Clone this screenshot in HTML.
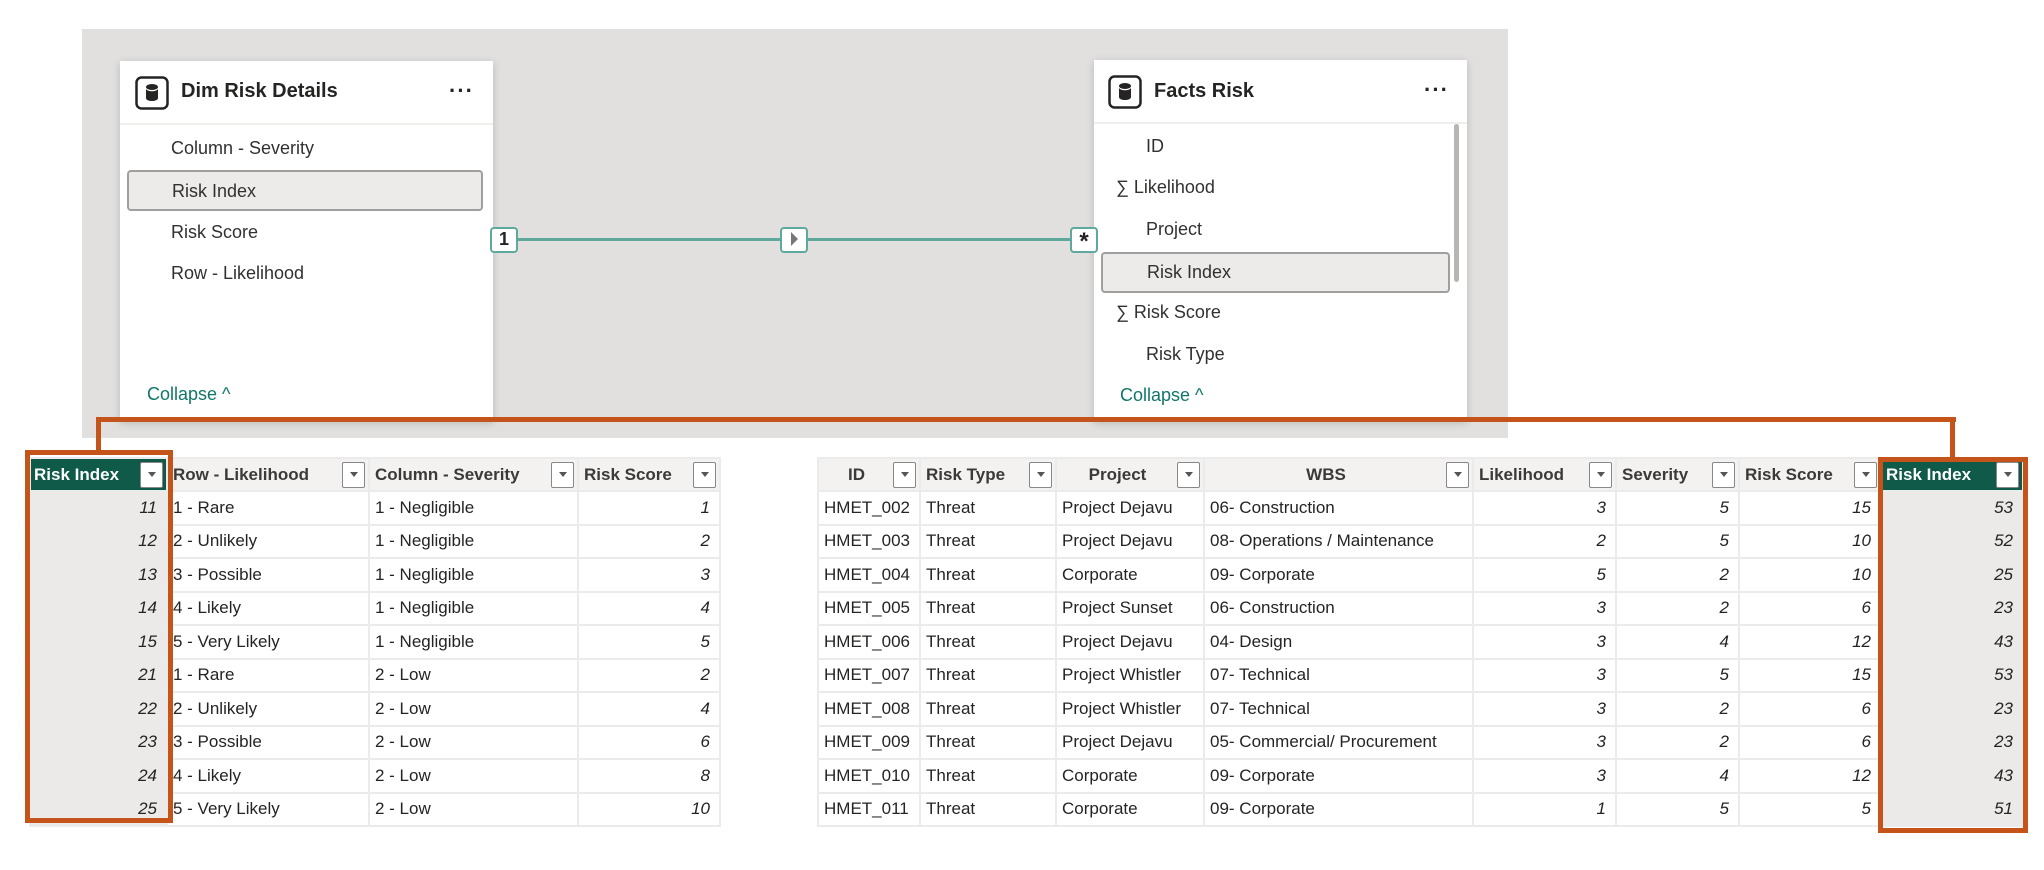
<!DOCTYPE html>
<html><head><meta charset="utf-8"><style>
*{box-sizing:border-box;margin:0;padding:0}
body{width:2044px;height:870px;background:#fff;position:relative;overflow:hidden;font-family:"Liberation Sans",sans-serif;color:#252423}
.abs{position:absolute}
.gray{left:82px;top:29px;width:1426px;height:409px;background:#e1e0df}
.card{background:#fff;box-shadow:0 2px 8px rgba(0,0,0,.18)}
.title{font-size:20px;font-weight:bold;color:#252423}
.dots{font-size:22px;font-weight:bold;letter-spacing:1px}
.fld{font-size:18px;color:#323130}
.sel{background:#edebe9;border:2px solid #a19f9d;border-radius:4px}
.col{font-size:18px;color:#11766a}
.conn{background:#fff;border:2.5px solid #5fa89c;border-radius:4px;font-size:18px;font-weight:bold;text-align:center;line-height:21px}
table{border-collapse:collapse;table-layout:fixed;position:absolute;font-size:17px}
td,th{height:33.5px;border:2px solid #ebebeb;white-space:nowrap;overflow:hidden;padding:0 5px;font-weight:normal;text-align:left}
th{background:#f3f2f1;font-weight:bold;font-size:17px;position:relative;height:33px;color:#3b3a39}
th .dd{position:absolute;right:3px;top:3px;width:23px;height:26px;border:1.5px solid #8a8886;background:#fff;border-radius:2px}
th .dd:after{content:"";position:absolute;left:7px;top:9px;border-left:4px solid transparent;border-right:4px solid transparent;border-top:5px solid #555}
td.n{text-align:right;font-style:italic;padding-right:9px}
th.g{background:#0f5a48;color:#fff}
td.ri{background:#ebeae9}
.ob{border:5px solid #c4541a}
</style></head><body>
<div class="abs gray"></div>

<!-- Dim card -->
<div class="abs card" style="left:120px;top:61px;width:373px;height:360px"></div>
<svg class="abs" style="left:135px;top:76px" width="34" height="34" viewBox="0 0 34 34"><rect x="1.5" y="1.5" width="31" height="31" rx="5" fill="none" stroke="#252423" stroke-width="2.5"/><ellipse cx="17" cy="11" rx="6" ry="3" fill="#252423"/><path d="M11 13v9c0 2 3 3 6 3s6-1 6-3v-9c-1 1.5-3.5 2.3-6 2.3S12 14.5 11 13z" fill="#252423"/></svg>
<div class="abs title" style="left:181px;top:80px">Dim Risk Details</div>
<div class="abs dots" style="left:449px;top:78px">···</div>
<div class="abs" style="left:120px;top:123px;width:373px;height:2px;background:#f0efee"></div>
<div class="abs fld" style="left:171px;top:138px">Column - Severity</div>
<div class="abs sel" style="left:127px;top:170px;width:356px;height:41px"></div>
<div class="abs fld" style="left:172px;top:181px">Risk Index</div>
<div class="abs fld" style="left:171px;top:222px">Risk Score</div>
<div class="abs fld" style="left:171px;top:263px">Row - Likelihood</div>
<div class="abs col" style="left:147px;top:384px">Collapse ^</div>

<!-- Facts card -->
<div class="abs card" style="left:1094px;top:60px;width:373px;height:361px"></div>
<svg class="abs" style="left:1108px;top:75px" width="34" height="34" viewBox="0 0 34 34"><rect x="1.5" y="1.5" width="31" height="31" rx="5" fill="none" stroke="#252423" stroke-width="2.5"/><ellipse cx="17" cy="11" rx="6" ry="3" fill="#252423"/><path d="M11 13v9c0 2 3 3 6 3s6-1 6-3v-9c-1 1.5-3.5 2.3-6 2.3S12 14.5 11 13z" fill="#252423"/></svg>
<div class="abs title" style="left:1154px;top:80px">Facts Risk</div>
<div class="abs dots" style="left:1424px;top:77px">···</div>
<div class="abs" style="left:1094px;top:122px;width:373px;height:2px;background:#f0efee"></div>
<div class="abs" style="left:1454px;top:124px;width:5px;height:158px;background:#b8b6b4;border-radius:3px"></div>
<div class="abs fld" style="left:1146px;top:136px">ID</div>
<div class="abs fld" style="left:1116px;top:177px">∑ Likelihood</div>
<div class="abs fld" style="left:1146px;top:219px">Project</div>
<div class="abs sel" style="left:1101px;top:252px;width:349px;height:41px"></div>
<div class="abs fld" style="left:1147px;top:262px">Risk Index</div>
<div class="abs fld" style="left:1116px;top:302px">∑ Risk Score</div>
<div class="abs fld" style="left:1146px;top:344px">Risk Type</div>
<div class="abs col" style="left:1120px;top:385px">Collapse ^</div>

<!-- connector -->
<div class="abs" style="left:515px;top:238px;width:560px;height:3px;background:#5fa89c"></div>
<div class="abs conn" style="left:490px;top:227px;width:28px;height:26px">1</div>
<div class="abs conn" style="left:780px;top:227px;width:28px;height:26px"><svg width="12" height="16" viewBox="0 0 12 16" style="margin-top:2px"><path d="M3 1l7 7-7 7z" fill="#777"/></svg></div>
<div class="abs conn" style="left:1070px;top:227px;width:28px;height:26px;font-size:24px;line-height:26px">*</div>

<!-- orange connectors -->
<div class="abs" style="left:96px;top:417px;width:1860px;height:5px;background:#c4541a"></div>
<div class="abs" style="left:96px;top:417px;width:5px;height:36px;background:#c4541a"></div>
<div class="abs" style="left:1950px;top:417px;width:5px;height:44px;background:#c4541a"></div>

<!-- left table -->
<table style="left:29px;top:457px;width:690px">
<colgroup><col style="width:137px"><col style="width:202px"><col style="width:209px"><col style="width:142px"></colgroup>
<tr><th class="g" style="padding-left:3px">Risk Index<span class="dd"></span></th><th>Row - Likelihood<span class="dd"></span></th><th>Column - Severity<span class="dd"></span></th><th>Risk Score<span class="dd"></span></th></tr>
<tr><td class="n ri">11</td><td>1 - Rare</td><td>1 - Negligible</td><td class="n">1</td></tr>
<tr><td class="n ri">12</td><td>2 - Unlikely</td><td>1 - Negligible</td><td class="n">2</td></tr>
<tr><td class="n ri">13</td><td>3 - Possible</td><td>1 - Negligible</td><td class="n">3</td></tr>
<tr><td class="n ri">14</td><td>4 - Likely</td><td>1 - Negligible</td><td class="n">4</td></tr>
<tr><td class="n ri">15</td><td>5 - Very Likely</td><td>1 - Negligible</td><td class="n">5</td></tr>
<tr><td class="n ri">21</td><td>1 - Rare</td><td>2 - Low</td><td class="n">2</td></tr>
<tr><td class="n ri">22</td><td>2 - Unlikely</td><td>2 - Low</td><td class="n">4</td></tr>
<tr><td class="n ri">23</td><td>3 - Possible</td><td>2 - Low</td><td class="n">6</td></tr>
<tr><td class="n ri">24</td><td>4 - Likely</td><td>2 - Low</td><td class="n">8</td></tr>
<tr><td class="n ri">25</td><td>5 - Very Likely</td><td>2 - Low</td><td class="n">10</td></tr>
</table>
<div class="abs ob" style="left:25px;top:450px;width:148px;height:373px"></div>

<!-- right table -->
<table style="left:817px;top:457px;width:1205px">
<colgroup><col style="width:102px"><col style="width:136px"><col style="width:148px"><col style="width:269px"><col style="width:143px"><col style="width:123px"><col style="width:142px"><col style="width:142px"></colgroup>
<tr><th style="text-align:center;padding-right:30px">ID<span class="dd"></span></th><th>Risk Type<span class="dd"></span></th><th style="text-align:center;padding-right:30px">Project<span class="dd"></span></th><th style="text-align:center;padding-right:30px">WBS<span class="dd"></span></th><th>Likelihood<span class="dd"></span></th><th>Severity<span class="dd"></span></th><th>Risk Score<span class="dd"></span></th><th class="g" style="padding-left:4px">Risk Index<span class="dd"></span></th></tr>
<tr><td>HMET_002</td><td>Threat</td><td>Project Dejavu</td><td>06- Construction</td><td class="n">3</td><td class="n">5</td><td class="n">15</td><td class="n ri">53</td></tr>
<tr><td>HMET_003</td><td>Threat</td><td>Project Dejavu</td><td>08- Operations / Maintenance</td><td class="n">2</td><td class="n">5</td><td class="n">10</td><td class="n ri">52</td></tr>
<tr><td>HMET_004</td><td>Threat</td><td>Corporate</td><td>09- Corporate</td><td class="n">5</td><td class="n">2</td><td class="n">10</td><td class="n ri">25</td></tr>
<tr><td>HMET_005</td><td>Threat</td><td>Project Sunset</td><td>06- Construction</td><td class="n">3</td><td class="n">2</td><td class="n">6</td><td class="n ri">23</td></tr>
<tr><td>HMET_006</td><td>Threat</td><td>Project Dejavu</td><td>04- Design</td><td class="n">3</td><td class="n">4</td><td class="n">12</td><td class="n ri">43</td></tr>
<tr><td>HMET_007</td><td>Threat</td><td>Project Whistler</td><td>07- Technical</td><td class="n">3</td><td class="n">5</td><td class="n">15</td><td class="n ri">53</td></tr>
<tr><td>HMET_008</td><td>Threat</td><td>Project Whistler</td><td>07- Technical</td><td class="n">3</td><td class="n">2</td><td class="n">6</td><td class="n ri">23</td></tr>
<tr><td>HMET_009</td><td>Threat</td><td>Project Dejavu</td><td>05- Commercial/ Procurement</td><td class="n">3</td><td class="n">2</td><td class="n">6</td><td class="n ri">23</td></tr>
<tr><td>HMET_010</td><td>Threat</td><td>Corporate</td><td>09- Corporate</td><td class="n">3</td><td class="n">4</td><td class="n">12</td><td class="n ri">43</td></tr>
<tr><td>HMET_011</td><td>Threat</td><td>Corporate</td><td>09- Corporate</td><td class="n">1</td><td class="n">5</td><td class="n">5</td><td class="n ri">51</td></tr>
</table>
<div class="abs ob" style="left:1878px;top:457px;width:150px;height:376px"></div>
</body></html>
